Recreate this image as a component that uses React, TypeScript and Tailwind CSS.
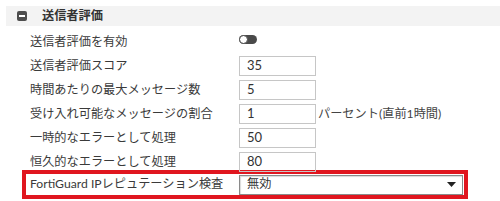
const rows: { label: string; value: string; suffix?: string }[] = [
  { label: '送信者評価スコア', value: '35' },
  { label: '時間あたりの最大メッセージ数', value: '5' },
  { label: '受け入れ可能なメッセージの割合', value: '1', suffix: 'パーセント(直前1時間)' },
  { label: '一時的なエラーとして処理', value: '50' },
  { label: '恒久的なエラーとして処理', value: '80' },
];

function Toggle() {
  return (
    <div className="relative h-[9px] w-[18px] rounded-full bg-[#4a4a4a]">
      <div className="absolute left-0 top-0 h-[9px] w-[9px] rounded-full border border-[#4a4a4a] bg-white" />
    </div>
  );
}

export default function App() {
  return (
    <div
      className="h-[201px] w-[500px] overflow-hidden bg-white pt-[6px] text-[12.2px] text-[#3a3a3a]"
      style={{ fontFamily: "Lato, 'Noto Sans CJK JP', sans-serif" }}
    >
      <div className="ml-[6px] flex h-[20px] items-center bg-[#f3f3f3]">
        <div className="ml-[11px] flex h-[10px] w-[10px] items-center justify-center rounded-[2px] bg-[#4d4d4d]">
          <div className="h-[2px] w-[6px] bg-white" />
        </div>
        <span className="ml-[15px] font-bold text-[#333]">送信者評価</span>
      </div>

      <div className="mt-[4px] pl-[30px]">
        <div className="flex h-[24px] items-center">
          <span className="w-[209px]">送信者評価を有効</span>
          <div className="-mt-[5px]">
            <Toggle />
          </div>
        </div>
        {rows.map((r) => (
          <div key={r.label} className="flex h-[24px] items-center">
            <span className="w-[209px]">{r.label}</span>
            <div className="flex h-[20px] w-[77px] items-center border border-[#c6c6c6] pl-[7px] text-[13px] text-[#333]">
              {r.value}
            </div>
            {r.suffix && <span className="ml-[2px] text-[#444]">{r.suffix}</span>}
          </div>
        ))}
      </div>

      <div className="-mt-[4px] ml-[22px] flex h-[29px] w-[446px] items-center border-[4px] border-[#e0161f] pl-[4px] pr-px">
        <span className="w-[209px]">FortiGuard IPレピュテーション検査</span>
        <div className="flex h-[20px] flex-1 items-center justify-between border border-[#8a8a8a] pl-[7px] pr-[6px] text-[#333] shadow-[inset_1px_1px_1px_rgba(0,0,0,0.15)]">
          <span>無効</span>
          <svg width="9" height="5" viewBox="0 0 9 5">
            <path d="M0 0 H9 L4.5 5 Z" fill="#222" />
          </svg>
        </div>
      </div>
    </div>
  );
}
